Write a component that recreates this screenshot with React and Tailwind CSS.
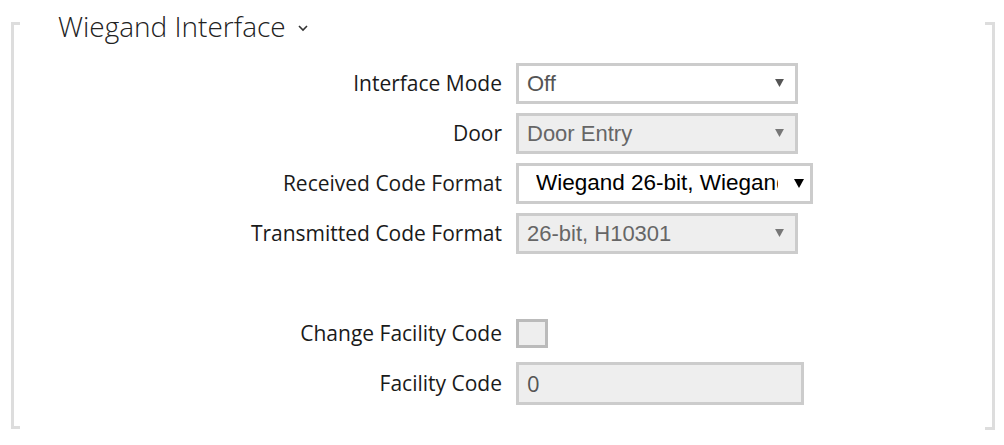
import React from "react";

const labelCls =
  "w-[496px] text-right pr-[14px] text-[21px] text-[#1a1a1a] leading-none [font-family:'Open_Sans','Noto_Sans',sans-serif]";

function Arrow({ color = "#555", w = 9, h = 8 }) {
  return (
    <svg width={w} height={h} viewBox="0 0 10 9" className="shrink-0">
      <polygon points="0,0 10,0 5,9" fill={color} />
    </svg>
  );
}

function Select({ value, disabled, wide }) {
  if (wide) {
    return (
      <div className="w-[297px] h-[41px] border-[3px] border-[#ccc] bg-white flex items-center pl-[17px] pr-[6px] [font-family:'Liberation_Sans',Arial,sans-serif] text-[22.5px] text-black">
        <span className="w-[242px] overflow-hidden whitespace-nowrap">{value}</span>
        <span className="ml-auto">
          <Arrow color="#000" w={10} h={9} />
        </span>
      </div>
    );
  }
  return (
    <div
      className={
        "w-[282px] h-[41px] border-[3px] border-[#ccc] flex items-center pl-[8px] pr-[11px] [font-family:'Liberation_Sans',Arial,sans-serif] text-[22px] " +
        (disabled ? "bg-[#eee] text-[#666]" : "bg-white text-[#555]")
      }
    >
      <span className="flex-1 overflow-hidden whitespace-nowrap">{value}</span>
      <Arrow color={disabled ? "#777" : "#555"} />
    </div>
  );
}

function Row({ label, children }) {
  return (
    <div className="flex items-center h-[50px]">
      <div className={labelCls}>{label}</div>
      {children}
    </div>
  );
}

export default function App() {
  return (
    <div className="w-[1004px] h-[445px] bg-white flex pt-[22px] pl-[11px] pr-[9px] overflow-hidden">
      <div className="w-[9px] h-[407px] border-l-[3px] border-y-[3px] border-[#ddd] shrink-0" />
      <div className="flex-1 flex flex-col">
        <div className="-mt-[21px] h-[57px] pb-[7px] flex items-center pl-[38px] gap-[12px]">
          <span className="text-[28px] font-light text-[#222] [font-family:'Open_Sans','Noto_Sans',sans-serif] leading-none">
            Wiegand Interface
          </span>
          <svg width="10" height="7" viewBox="0 0 10 7" className="mt-[4px]">
            <polyline points="1,1 5,5 9,1" fill="none" stroke="#333" strokeWidth="1.6" />
          </svg>
        </div>
        <Row label="Interface Mode">
          <Select value="Off" />
        </Row>
        <Row label="Door">
          <Select value="Door Entry" disabled />
        </Row>
        <Row label="Received Code Format">
          <Select value="Wiegand 26-bit, Wiegand 34-bit" wide />
        </Row>
        <Row label="Transmitted Code Format">
          <Select value="26-bit, H10301" disabled />
        </Row>
        <div className="h-[50px]" />
        <Row label="Change Facility Code">
          <div className="w-[32px] h-[29px] border-[3px] border-[#bbb] bg-[#eee]" />
        </Row>
        <Row label="Facility Code">
          <div className="w-[288px] h-[43px] border-[3px] border-[#ccc] bg-[#eee] flex items-center pl-[8px] text-[22px] text-[#555] [font-family:'Open_Sans','Noto_Sans',sans-serif]">
            0
          </div>
        </Row>
      </div>
      <div className="w-[10px] h-[408px] border-r-[3px] border-y-[3px] border-[#ddd] shrink-0" />
    </div>
  );
}
